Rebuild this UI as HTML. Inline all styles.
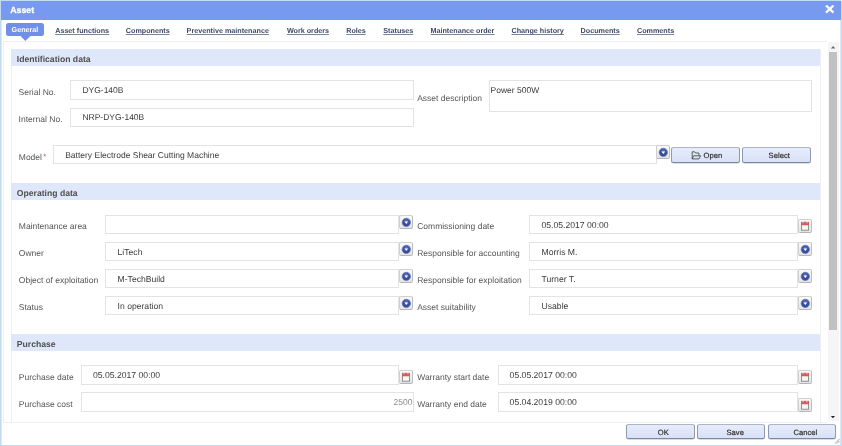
<!DOCTYPE html>
<html><head><meta charset="utf-8"><title>Asset</title><style>
*{margin:0;padding:0;box-sizing:border-box}
html,body{width:842px;height:446px;overflow:hidden;background:#b9d3f3;font-family:"Liberation Sans",sans-serif}
#w{position:absolute;left:0;top:0;width:842px;height:446px;background:#fff;overflow:hidden;will-change:transform}
.bd{background:#c2daf2}
.bd2{background:#d9e9f8}
#w>div,#w>svg{position:absolute}
.t{position:absolute;white-space:nowrap;text-rendering:geometricPrecision}
.title{background:#7799ef}
.seltab{background:#7090e8;border-radius:2.5px}
.panel{border:1px solid #f0f0f0;border-right-color:transparent;background:#fff}
.sbar{background:#f5f5f5}
.thumb{background:#c1c1c1}
.sect{border-left:1px solid #efefef;border-right:1px solid #efefef}
.hdr{background:#dfe7fa}
.inp{border:1px solid #e3e3e3;background:#fff}
.btn{position:absolute;width:14px;height:14px;border:1px solid #cfcfcf;border-right-color:#bdbdbd;border-bottom-color:#b5b5b5;border-radius:2px;background:linear-gradient(#fafafa,#e4e4e4)}
.pb{position:absolute;border:1px solid #8e9ab0;border-top-color:#aeb6c6;border-bottom-color:#7d889c;border-radius:2.5px;background:linear-gradient(#e6ecfb,#d8e1f6);font-size:7.2px;font-weight:bold;color:#3a3a3a;text-align:center;box-shadow:0 0.5px 0 #b6bfd0}
</style></head><body><svg width="0" height="0" style="position:absolute"><defs><radialGradient id="gb" cx="50%" cy="35%" r="60%"><stop offset="0" stop-color="#6478c0"/><stop offset="0.6" stop-color="#3b519f"/><stop offset="1" stop-color="#31468e"/></radialGradient></defs></svg><div id="w">
<div class="bd" style="left:0.00px;top:0.00px;width:1.00px;height:446.00px;"></div>
<div class="bd2" style="left:1.00px;top:0.00px;width:1.00px;height:446.00px;"></div>
<div class="bd" style="left:0.00px;top:0.00px;width:842.00px;height:1.00px;"></div>
<div class="bd2" style="left:840.00px;top:0.00px;width:1.00px;height:446.00px;"></div>
<div class="bd" style="left:841.00px;top:0.00px;width:1.00px;height:446.00px;"></div>
<div class="bd" style="left:0.00px;top:444.80px;width:842.00px;height:1.20px;"></div>
<div class="title" style="left:1.00px;top:1.00px;width:839.50px;height:19.00px;"></div>
<div class="t" style="left:10.20px;top:4.64px;font-size:8.8px;line-height:10.56px;font-weight:bold;color:#fff;-webkit-text-stroke:0.25px #fff;">Asset</div>
<svg class="x" style="position:absolute;left:824.5px;top:4.8px" width="10" height="9" viewBox="0 0 10 9"><path d="M1.0 0.5 L8.5 7.6 M8.5 0.5 L1.0 7.6" stroke="#fff" stroke-width="2.3"/></svg>
<div class="seltab" style="left:5.9px;top:23px;width:38.3px;height:12.8px"></div>
<svg style="position:absolute;left:20px;top:35.5px" width="11" height="6" viewBox="0 0 11 6"><path d="M0.5 0 L10.5 0 L5.3 5" fill="#7090e8"/></svg>
<div class="t" style="left:11.60px;top:26.48px;font-size:7.2px;line-height:8.64px;font-weight:bold;color:#fff;">General</div>
<div class="t" style="left:55.20px;top:26.78px;font-size:7.2px;line-height:8.64px;font-weight:bold;color:#3d4a66;text-decoration:underline;text-decoration-color:#7d879c;text-decoration-skip-ink:none;">Asset functions</div>
<div class="t" style="left:125.80px;top:26.78px;font-size:7.2px;line-height:8.64px;font-weight:bold;color:#3d4a66;text-decoration:underline;text-decoration-color:#7d879c;text-decoration-skip-ink:none;">Components</div>
<div class="t" style="left:186.60px;top:26.78px;font-size:7.2px;line-height:8.64px;font-weight:bold;color:#3d4a66;text-decoration:underline;text-decoration-color:#7d879c;text-decoration-skip-ink:none;">Preventive maintenance</div>
<div class="t" style="left:286.90px;top:26.78px;font-size:7.2px;line-height:8.64px;font-weight:bold;color:#3d4a66;text-decoration:underline;text-decoration-color:#7d879c;text-decoration-skip-ink:none;">Work orders</div>
<div class="t" style="left:346.20px;top:26.78px;font-size:7.2px;line-height:8.64px;font-weight:bold;color:#3d4a66;text-decoration:underline;text-decoration-color:#7d879c;text-decoration-skip-ink:none;">Roles</div>
<div class="t" style="left:383.30px;top:26.78px;font-size:7.2px;line-height:8.64px;font-weight:bold;color:#3d4a66;text-decoration:underline;text-decoration-color:#7d879c;text-decoration-skip-ink:none;">Statuses</div>
<div class="t" style="left:430.50px;top:26.78px;font-size:7.2px;line-height:8.64px;font-weight:bold;color:#3d4a66;text-decoration:underline;text-decoration-color:#7d879c;text-decoration-skip-ink:none;">Maintenance order</div>
<div class="t" style="left:511.50px;top:26.78px;font-size:7.2px;line-height:8.64px;font-weight:bold;color:#3d4a66;text-decoration:underline;text-decoration-color:#7d879c;text-decoration-skip-ink:none;">Change history</div>
<div class="t" style="left:580.60px;top:26.78px;font-size:7.2px;line-height:8.64px;font-weight:bold;color:#3d4a66;text-decoration:underline;text-decoration-color:#7d879c;text-decoration-skip-ink:none;">Documents</div>
<div class="t" style="left:637.00px;top:26.78px;font-size:7.2px;line-height:8.64px;font-weight:bold;color:#3d4a66;text-decoration:underline;text-decoration-color:#7d879c;text-decoration-skip-ink:none;">Comments</div>
<div class="panel" style="left:3.00px;top:41.00px;width:825.00px;height:381.50px;"></div>
<div class="sbar" style="left:828.00px;top:41.50px;width:10.50px;height:379.50px;"></div>
<div class="thumb" style="left:829.00px;top:52.00px;width:7.60px;height:277.70px;"></div>
<svg style="position:absolute;left:830px;top:45px" width="6" height="4" viewBox="0 0 6 4"><path d="M0.9 3.4 L5.3 3.4 L3.1 1.0Z" fill="#6a6a6a"/></svg>
<svg style="position:absolute;left:830px;top:415px" width="6" height="4" viewBox="0 0 6 4"><path d="M0.8 0.9 L5.0 0.9 L2.9 3.3Z" fill="#222"/></svg>
<div class="sect" style="left:11.00px;top:49.00px;width:809.80px;height:374.00px;"></div>
<div class="hdr" style="left:11.00px;top:49.00px;width:809.10px;height:17.00px;"></div>
<div class="t" style="left:16.80px;top:53.87px;font-size:8.65px;line-height:10.38px;font-weight:bold;color:#505050;">Identification data</div>
<div class="t" style="left:18.60px;top:87.31px;font-size:8.5px;line-height:10.20px;font-weight:normal;color:#555555;">Serial No.</div>
<div class="inp" style="left:70.00px;top:80.00px;width:343.60px;height:20.00px;"></div>
<div class="t" style="left:82.40px;top:85.31px;font-size:8.5px;line-height:10.20px;font-weight:normal;color:#3a3a3a;">DYG-140B</div>
<div class="t" style="left:18.60px;top:114.21px;font-size:8.5px;line-height:10.20px;font-weight:normal;color:#555555;">Internal No.</div>
<div class="inp" style="left:70.00px;top:107.50px;width:343.60px;height:19.50px;"></div>
<div class="t" style="left:82.40px;top:112.31px;font-size:8.5px;line-height:10.20px;font-weight:normal;color:#3a3a3a;">NRP-DYG-140B</div>
<div class="t" style="left:417.20px;top:93.31px;font-size:8.5px;line-height:10.20px;font-weight:normal;color:#555555;">Asset description</div>
<div class="inp" style="left:489.40px;top:80.30px;width:323.00px;height:31.40px;"></div>
<div class="t" style="left:490.50px;top:85.41px;font-size:8.5px;line-height:10.20px;font-weight:normal;color:#3a3a3a;">Power 500W</div>
<div class="t" style="left:18.80px;top:152.01px;font-size:8.5px;line-height:10.20px;font-weight:normal;color:#555555;">Model<span style="color:#b04a4a;font-size:7.5px;margin-left:1.2px;position:relative;top:-0.8px">*</span></div>
<div class="inp" style="left:53.40px;top:145.30px;width:603.20px;height:18.90px;"></div>
<div class="t" style="left:65.20px;top:149.71px;font-size:8.5px;line-height:10.20px;font-weight:normal;color:#3a3a3a;">Battery Electrode Shear Cutting Machine</div>
<div class="btn" style="left:656.40px;top:145.30px"><svg width="14" height="14" viewBox="0 0 14 14" style="position:absolute;left:-1px;top:-1px"><circle cx="7.3" cy="7.4" r="4.15" fill="url(#gb)" stroke="#6477bd" stroke-width="0.8"/><path d="M5.5 6.5 L9.1 6.5 L7.3 8.9Z" fill="#fff"/></svg></div>
<div class="pb" style="left:671.00px;top:147.30px;width:68.50px;height:15.30px"></div>
<div class="t" style="left:703.60px;top:151.42px;font-size:7.6px;line-height:9.12px;font-weight:normal;color:#303030;-webkit-text-stroke:0.2px #303030;letter-spacing:0.05px;">Open</div>
<svg style="position:absolute;left:690px;top:150px" width="12" height="10" viewBox="0 0 12 10"><path d="M2.2 8.9 V1.8 H4.6 L5.5 3 H8.9 V5.6 M2.2 8.9 L3.6 5.8 H10.7 L8.9 8.9 Z" fill="none" stroke="#444" stroke-width="0.85" stroke-linejoin="round"/></svg>
<div class="pb" style="left:741.80px;top:147.30px;width:68.90px;height:15.30px"></div>
<div class="t" style="left:768.60px;top:151.42px;font-size:7.6px;line-height:9.12px;font-weight:normal;color:#303030;-webkit-text-stroke:0.2px #303030;letter-spacing:0.05px;">Select</div>
<div class="hdr" style="left:11.00px;top:183.00px;width:809.10px;height:17.00px;"></div>
<div class="t" style="left:16.80px;top:188.17px;font-size:8.65px;line-height:10.38px;font-weight:bold;color:#505050;">Operating data</div>
<div class="t" style="left:18.80px;top:220.91px;font-size:8.5px;line-height:10.20px;font-weight:normal;color:#555555;">Maintenance area</div>
<div class="inp" style="left:105.20px;top:215.00px;width:294.30px;height:18.50px;"></div>
<div class="t" style="left:117.60px;top:219.62px;font-size:8.6px;line-height:10.32px;font-weight:normal;color:#3a3a3a;"></div>
<div class="btn" style="left:399.30px;top:215.00px"><svg width="14" height="14" viewBox="0 0 14 14" style="position:absolute;left:-1px;top:-1px"><circle cx="7.3" cy="7.4" r="4.15" fill="url(#gb)" stroke="#6477bd" stroke-width="0.8"/><path d="M5.5 6.5 L9.1 6.5 L7.3 8.9Z" fill="#fff"/></svg></div>
<div class="t" style="left:417.20px;top:220.91px;font-size:8.5px;line-height:10.20px;font-weight:normal;color:#555555;">Commissioning date</div>
<div class="inp" style="left:529.20px;top:215.00px;width:268.60px;height:18.50px;"></div>
<div class="t" style="left:541.50px;top:219.57px;font-size:8.65px;line-height:10.38px;font-weight:normal;color:#3a3a3a;">05.05.2017 00:00</div>
<div class="btn" style="left:798.30px;top:219.20px"><svg width="14" height="14" viewBox="0 0 14 14" style="position:absolute;left:-1px;top:-1px"><g transform="translate(0.8 0)"><rect x="2.6" y="3.3" width="7.2" height="7.9" fill="#f5f5f5" stroke="#7a7a7a" stroke-width="0.8"/><path d="M2.2 6.3 L2.2 3.4 Q3.2 2.3 4.2 3.2 Q6.2 2.4 8.2 3.2 Q9.2 2.3 10.2 3.4 L10.2 6.3Z" fill="#d35d5d"/><circle cx="4.2" cy="3.7" r="0.6" fill="#f6d6d6"/><circle cx="8.2" cy="3.7" r="0.6" fill="#f6d6d6"/></g></svg></div>
<div class="t" style="left:18.80px;top:248.31px;font-size:8.5px;line-height:10.20px;font-weight:normal;color:#555555;">Owner</div>
<div class="inp" style="left:105.20px;top:242.40px;width:294.30px;height:18.50px;"></div>
<div class="t" style="left:117.60px;top:247.02px;font-size:8.6px;line-height:10.32px;font-weight:normal;color:#3a3a3a;">LiTech</div>
<div class="btn" style="left:399.30px;top:242.40px"><svg width="14" height="14" viewBox="0 0 14 14" style="position:absolute;left:-1px;top:-1px"><circle cx="7.3" cy="7.4" r="4.15" fill="url(#gb)" stroke="#6477bd" stroke-width="0.8"/><path d="M5.5 6.5 L9.1 6.5 L7.3 8.9Z" fill="#fff"/></svg></div>
<div class="t" style="left:417.20px;top:248.31px;font-size:8.5px;line-height:10.20px;font-weight:normal;color:#555555;">Responsible for accounting</div>
<div class="inp" style="left:529.20px;top:242.40px;width:268.60px;height:18.50px;"></div>
<div class="t" style="left:541.50px;top:246.97px;font-size:8.65px;line-height:10.38px;font-weight:normal;color:#3a3a3a;">Morris M.</div>
<div class="btn" style="left:798.30px;top:242.40px"><svg width="14" height="14" viewBox="0 0 14 14" style="position:absolute;left:-1px;top:-1px"><circle cx="7.3" cy="7.4" r="4.15" fill="url(#gb)" stroke="#6477bd" stroke-width="0.8"/><path d="M5.5 6.5 L9.1 6.5 L7.3 8.9Z" fill="#fff"/></svg></div>
<div class="t" style="left:18.80px;top:275.11px;font-size:8.5px;line-height:10.20px;font-weight:normal;color:#555555;">Object of exploitation</div>
<div class="inp" style="left:105.20px;top:269.20px;width:294.30px;height:18.50px;"></div>
<div class="t" style="left:117.60px;top:273.82px;font-size:8.6px;line-height:10.32px;font-weight:normal;color:#3a3a3a;">M-TechBuild</div>
<div class="btn" style="left:399.30px;top:269.20px"><svg width="14" height="14" viewBox="0 0 14 14" style="position:absolute;left:-1px;top:-1px"><circle cx="7.3" cy="7.4" r="4.15" fill="url(#gb)" stroke="#6477bd" stroke-width="0.8"/><path d="M5.5 6.5 L9.1 6.5 L7.3 8.9Z" fill="#fff"/></svg></div>
<div class="t" style="left:417.20px;top:275.11px;font-size:8.5px;line-height:10.20px;font-weight:normal;color:#555555;">Responsible for exploitation</div>
<div class="inp" style="left:529.20px;top:269.20px;width:268.60px;height:18.50px;"></div>
<div class="t" style="left:541.50px;top:273.77px;font-size:8.65px;line-height:10.38px;font-weight:normal;color:#3a3a3a;">Turner T.</div>
<div class="btn" style="left:798.30px;top:269.20px"><svg width="14" height="14" viewBox="0 0 14 14" style="position:absolute;left:-1px;top:-1px"><circle cx="7.3" cy="7.4" r="4.15" fill="url(#gb)" stroke="#6477bd" stroke-width="0.8"/><path d="M5.5 6.5 L9.1 6.5 L7.3 8.9Z" fill="#fff"/></svg></div>
<div class="t" style="left:18.80px;top:302.11px;font-size:8.5px;line-height:10.20px;font-weight:normal;color:#555555;">Status</div>
<div class="inp" style="left:105.20px;top:296.20px;width:294.30px;height:18.50px;"></div>
<div class="t" style="left:117.60px;top:300.82px;font-size:8.6px;line-height:10.32px;font-weight:normal;color:#3a3a3a;">In operation</div>
<div class="btn" style="left:399.30px;top:296.20px"><svg width="14" height="14" viewBox="0 0 14 14" style="position:absolute;left:-1px;top:-1px"><circle cx="7.3" cy="7.4" r="4.15" fill="url(#gb)" stroke="#6477bd" stroke-width="0.8"/><path d="M5.5 6.5 L9.1 6.5 L7.3 8.9Z" fill="#fff"/></svg></div>
<div class="t" style="left:417.20px;top:302.11px;font-size:8.5px;line-height:10.20px;font-weight:normal;color:#555555;">Asset suitability</div>
<div class="inp" style="left:529.20px;top:296.20px;width:268.60px;height:18.50px;"></div>
<div class="t" style="left:541.50px;top:300.77px;font-size:8.65px;line-height:10.38px;font-weight:normal;color:#3a3a3a;">Usable</div>
<div class="btn" style="left:798.30px;top:296.20px"><svg width="14" height="14" viewBox="0 0 14 14" style="position:absolute;left:-1px;top:-1px"><circle cx="7.3" cy="7.4" r="4.15" fill="url(#gb)" stroke="#6477bd" stroke-width="0.8"/><path d="M5.5 6.5 L9.1 6.5 L7.3 8.9Z" fill="#fff"/></svg></div>
<div class="hdr" style="left:11.00px;top:334.00px;width:809.10px;height:16.60px;"></div>
<div class="t" style="left:16.80px;top:338.77px;font-size:8.65px;line-height:10.38px;font-weight:bold;color:#505050;">Purchase</div>
<div class="t" style="left:18.80px;top:371.81px;font-size:8.5px;line-height:10.20px;font-weight:normal;color:#555555;">Purchase date</div>
<div class="inp" style="left:81.40px;top:365.00px;width:318.10px;height:19.60px;"></div>
<div class="t" style="left:93.00px;top:370.17px;font-size:8.65px;line-height:10.38px;font-weight:normal;color:#3a3a3a;">05.05.2017 00:00</div>
<div class="btn" style="left:399.30px;top:370.00px"><svg width="14" height="14" viewBox="0 0 14 14" style="position:absolute;left:-1px;top:-1px"><g transform="translate(0.8 0)"><rect x="2.6" y="3.3" width="7.2" height="7.9" fill="#f5f5f5" stroke="#7a7a7a" stroke-width="0.8"/><path d="M2.2 6.3 L2.2 3.4 Q3.2 2.3 4.2 3.2 Q6.2 2.4 8.2 3.2 Q9.2 2.3 10.2 3.4 L10.2 6.3Z" fill="#d35d5d"/><circle cx="4.2" cy="3.7" r="0.6" fill="#f6d6d6"/><circle cx="8.2" cy="3.7" r="0.6" fill="#f6d6d6"/></g></svg></div>
<div class="t" style="left:417.20px;top:371.91px;font-size:8.5px;line-height:10.20px;font-weight:normal;color:#555555;">Warranty start date</div>
<div class="inp" style="left:498.20px;top:365.00px;width:299.70px;height:19.60px;"></div>
<div class="t" style="left:509.60px;top:370.17px;font-size:8.65px;line-height:10.38px;font-weight:normal;color:#3a3a3a;">05.05.2017 00:00</div>
<div class="btn" style="left:798.30px;top:370.30px"><svg width="14" height="14" viewBox="0 0 14 14" style="position:absolute;left:-1px;top:-1px"><g transform="translate(0.8 0)"><rect x="2.6" y="3.3" width="7.2" height="7.9" fill="#f5f5f5" stroke="#7a7a7a" stroke-width="0.8"/><path d="M2.2 6.3 L2.2 3.4 Q3.2 2.3 4.2 3.2 Q6.2 2.4 8.2 3.2 Q9.2 2.3 10.2 3.4 L10.2 6.3Z" fill="#d35d5d"/><circle cx="4.2" cy="3.7" r="0.6" fill="#f6d6d6"/><circle cx="8.2" cy="3.7" r="0.6" fill="#f6d6d6"/></g></svg></div>
<div class="t" style="left:18.80px;top:398.81px;font-size:8.5px;line-height:10.20px;font-weight:normal;color:#555555;">Purchase cost</div>
<div class="inp" style="left:81.40px;top:392.30px;width:332.20px;height:19.60px;"></div>
<div class="t" style="left:0.00px;top:396.91px;font-size:8.5px;line-height:10.20px;font-weight:normal;color:#8a8a8a;width:412.4px;text-align:right;">2500</div>
<div class="t" style="left:417.20px;top:398.81px;font-size:8.5px;line-height:10.20px;font-weight:normal;color:#555555;">Warranty end date</div>
<div class="inp" style="left:498.20px;top:392.30px;width:299.70px;height:19.60px;"></div>
<div class="t" style="left:509.60px;top:396.97px;font-size:8.65px;line-height:10.38px;font-weight:normal;color:#3a3a3a;">05.04.2019 00:00</div>
<div class="btn" style="left:798.30px;top:397.50px"><svg width="14" height="14" viewBox="0 0 14 14" style="position:absolute;left:-1px;top:-1px"><g transform="translate(0.8 0)"><rect x="2.6" y="3.3" width="7.2" height="7.9" fill="#f5f5f5" stroke="#7a7a7a" stroke-width="0.8"/><path d="M2.2 6.3 L2.2 3.4 Q3.2 2.3 4.2 3.2 Q6.2 2.4 8.2 3.2 Q9.2 2.3 10.2 3.4 L10.2 6.3Z" fill="#d35d5d"/><circle cx="4.2" cy="3.7" r="0.6" fill="#f6d6d6"/><circle cx="8.2" cy="3.7" r="0.6" fill="#f6d6d6"/></g></svg></div>
<div class="pb" style="left:625.80px;top:423.80px;width:68.90px;height:15.60px"></div>
<div class="t" style="left:657.80px;top:427.82px;font-size:7.6px;line-height:9.12px;font-weight:normal;color:#303030;-webkit-text-stroke:0.2px #303030;letter-spacing:0.05px;">OK</div>
<div class="pb" style="left:696.70px;top:423.80px;width:68.40px;height:15.60px"></div>
<div class="t" style="left:726.40px;top:427.82px;font-size:7.6px;line-height:9.12px;font-weight:normal;color:#303030;-webkit-text-stroke:0.2px #303030;letter-spacing:0.05px;">Save</div>
<div class="pb" style="left:767.60px;top:423.80px;width:68.90px;height:15.60px"></div>
<div class="t" style="left:793.40px;top:427.82px;font-size:7.6px;line-height:9.12px;font-weight:normal;color:#303030;-webkit-text-stroke:0.2px #303030;letter-spacing:0.05px;">Cancel</div>
<svg style="position:absolute;left:834px;top:438px" width="6" height="6" viewBox="0 0 6 6"><path d="M1 5.5 L5.5 1 M3 5.5 L5.5 3" stroke="#888" stroke-width="0.8"/></svg>
</div></body></html>
